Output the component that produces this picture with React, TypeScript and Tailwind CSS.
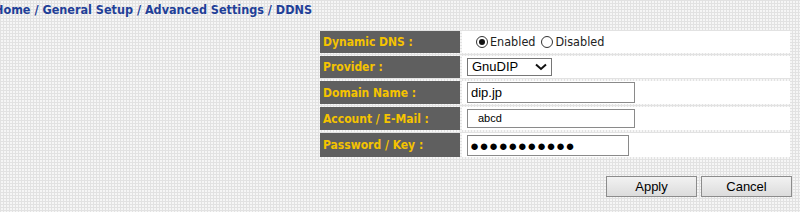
const labelCls =
  "bg-[#5f5f5f] text-[#f5c300] font-bold text-[12px] flex items-center pl-[3px]";

const Radio = ({ checked, label }: { checked?: boolean; label: string }) => (
  <span className="flex items-center gap-[2px]">
    <span className="w-[12px] h-[12px] rounded-full border border-[#333] bg-white flex items-center justify-center">
      {checked && <span className="w-[6px] h-[6px] rounded-full bg-[#111]" />}
    </span>
    <span>{label}</span>
  </span>
);

export default function App() {
  return (
    <div
      className="w-[800px] h-[212px] overflow-hidden bg-[#f6f6f6] bg-[linear-gradient(90deg,#e2e2e2_1px,transparent_1px),linear-gradient(#e2e2e2_1px,transparent_1px)] bg-[length:3px_3px]"
      style={{ fontFamily: "'DejaVu Sans Condensed', 'DejaVu Sans', Tahoma, sans-serif" }}
    >
      {/* Breadcrumb */}
      <div className="h-[31px] -ml-[6px] pt-[1px] text-[12.5px] font-bold text-[#1f3f98] leading-[17px] whitespace-nowrap">
        Home / General Setup / Advanced Settings / DDNS
      </div>

      {/* Settings table */}
      <div className="ml-[320px] w-[470px] grid grid-cols-[140px_1fr] gap-x-[2px] gap-y-[3px]">
        <div className={`${labelCls} h-[22px]`}>Dynamic DNS :</div>
        <div className="bg-white h-[22px] flex items-center gap-[6px] pl-[14px] text-[12.5px] text-[#222]">
          <Radio checked label="Enabled" />
          <Radio label="Disabled" />
        </div>

        <div className={`${labelCls} h-[22px]`}>Provider :</div>
        <div className="bg-white h-[22px] flex items-center pl-[5px] font-['Liberation_Sans',Arial,sans-serif]">
          <div className="w-[85px] h-[18px] border border-[#767676] flex items-center justify-between pl-[4px] pr-[4px] text-[13px] text-black">
            <span>GnuDIP</span>
            <svg width="12" height="8" viewBox="0 0 12 8" fill="none" stroke="#111" strokeWidth="2">
              <path d="M1 1.5l5 4.5 5-4.5" />
            </svg>
          </div>
        </div>

        <div className={`${labelCls} h-[23px]`}>Domain Name :</div>
        <div className="bg-white h-[23px] flex items-center pl-[5px] font-['Liberation_Sans',Arial,sans-serif]">
          <div className="w-[168px] h-[21px] border border-[#8a8a8a] flex items-center pl-[3px] text-[13px] text-black">
            dip.jp
          </div>
        </div>

        <div className={`${labelCls} h-[23px]`}>Account / E-Mail :</div>
        <div className="bg-white h-[23px] flex items-center pl-[5px] font-['Liberation_Sans',Arial,sans-serif]">
          <div className="w-[168px] h-[19px] border border-[#8a8a8a] flex items-end pb-[1px] pl-[10px] text-[11px] text-black">
            abcd
          </div>
        </div>

        <div className={`${labelCls} h-[24px]`}>Password / Key :</div>
        <div className="bg-white h-[24px] flex items-center pl-[5px] font-['Liberation_Sans',Arial,sans-serif]">
          <div className="w-[162px] h-[21px] border border-[#8a8a8a] flex items-center pl-[2px] text-[15px] leading-none tracking-[0.5px] text-black">
            ●●●●●●●●●●●
          </div>
        </div>
      </div>

      {/* Buttons */}
      <div className="flex justify-end gap-[4px] pr-[8px] mt-[19px] font-['Liberation_Sans',Arial,sans-serif]">
        <button className="w-[91px] h-[21px] border border-[#8c8c8c] bg-[linear-gradient(#f2f2f2,#dcdcdc)] text-[13px] text-black">
          Apply
        </button>
        <button className="w-[91px] h-[21px] border border-[#8c8c8c] bg-[linear-gradient(#f2f2f2,#dcdcdc)] text-[13px] text-black">
          Cancel
        </button>
      </div>
    </div>
  );
}
